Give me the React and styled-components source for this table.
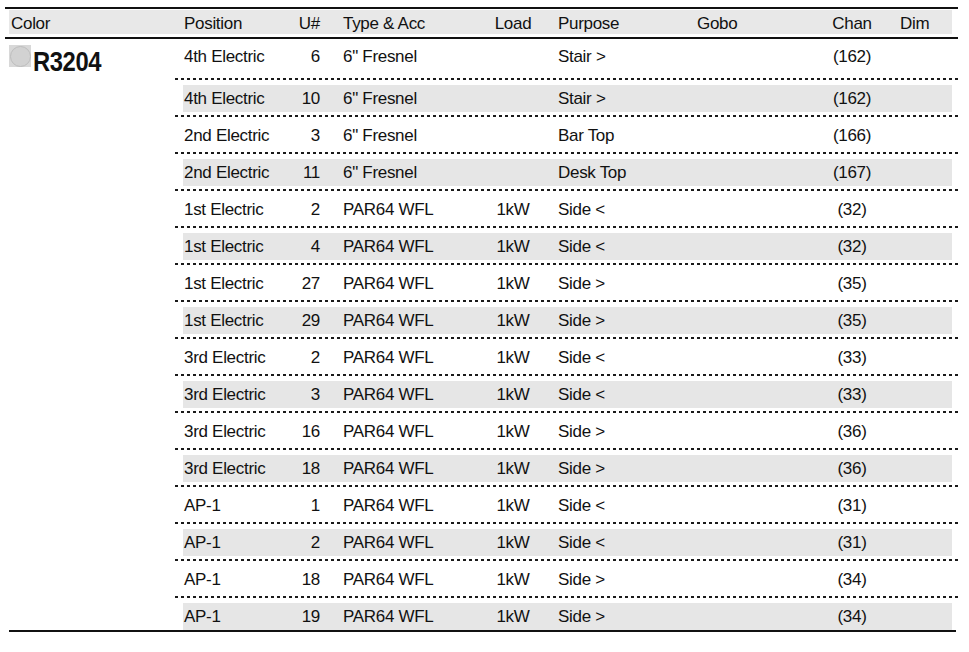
import React from 'react';
import styled, {createGlobalStyle} from 'styled-components';

const GlobalStyle = createGlobalStyle`
    html, body {
        margin: 0;
        padding: 0;
        background: #fff;
    }

    body {
        font-family: "Liberation Sans", Arial, sans-serif;
        color: #111;
    }
`;

// column grid shared by the header and every row (x measured from the band start at 183)
const columns = '107px 30px 153px 80px 137px 120px 84px 58px';

const Page = styled.div`
    width: 969px;
    padding-top: 7px;
`;

const Rule = styled.div`
    margin-left: ${({left}) => left}px;
    width: ${({width}) => width}px;
    height: 2px;
    background: #111;
    margin-top: ${({top}) => top || 0}px;
`;

const HeaderBar = styled.div`
    display: grid;
    grid-template-columns: 174px ${columns};
    margin: 1px 0 0 9px;
    width: 943px;
    height: 24px;
    background: #e8e8e8;
    box-sizing: border-box;
    padding-top: 4px;
    font-size: 17px;
    line-height: 20px;
    letter-spacing: -0.3px;
`;

const Cell = styled.div`
    white-space: nowrap;
    text-align: ${({align}) => align || 'left'};
    padding-left: ${({pl}) => pl || 0}px;
    padding-right: ${({pr}) => pr || 0}px;
`;

const Body = styled.div`
    display: flex;
    margin-left: 5px;
`;

const ColorCell = styled.div`
    width: 170px;
    display: flex;
    align-items: flex-start;
    padding: 6px 0 0 4px;
    box-sizing: border-box;
`;

const Swatch = styled.div`
    width: 22px;
    height: 22px;
    background: #d8d8d8;
    display: flex;
    align-items: center;
    justify-content: center;
    flex-shrink: 0;

    &::after {
        content: '';
        width: 19px;
        height: 19px;
        border-radius: 50%;
        border: 1px solid #bdbdbd;
        background: #d2d2d2;
    }
`;

const ColorName = styled.div`
    margin: 3px 0 0 2px;
    font-weight: bold;
    font-size: 28px;
    line-height: 28px;
    letter-spacing: -0.5px;
    transform: scaleX(0.85);
    transform-origin: left center;
`;

const Rows = styled.div`
    width: 783px;
`;

const Row = styled.div`
    padding: ${({first, last}) => (first ? '4px 0 8px' : last ? '7px 0 0' : '7px 0 3px')};
    background-image: ${({first}) =>
        first ? 'none' : 'repeating-linear-gradient(to right, #1a1a1a 0 3px, transparent 3px 6px)'};
    background-size: 100% 2px;
    background-repeat: no-repeat;
`;

const Band = styled.div`
    display: grid;
    grid-template-columns: ${columns};
    margin: 0 6px 0 8px;
    height: 27px;
    line-height: 27px;
    font-size: 17px;
    letter-spacing: -0.3px;
    background: ${({shaded}) => (shaded ? '#e6e6e6' : 'transparent')};
`;

const fixtures = [
    ['4th Electric', '6', '6" Fresnel', '', 'Stair >', '(162)'],
    ['4th Electric', '10', '6" Fresnel', '', 'Stair >', '(162)'],
    ['2nd Electric', '3', '6" Fresnel', '', 'Bar Top', '(166)'],
    ['2nd Electric', '11', '6" Fresnel', '', 'Desk Top', '(167)'],
    ['1st Electric', '2', 'PAR64 WFL', '1kW', 'Side <', '(32)'],
    ['1st Electric', '4', 'PAR64 WFL', '1kW', 'Side <', '(32)'],
    ['1st Electric', '27', 'PAR64 WFL', '1kW', 'Side >', '(35)'],
    ['1st Electric', '29', 'PAR64 WFL', '1kW', 'Side >', '(35)'],
    ['3rd Electric', '2', 'PAR64 WFL', '1kW', 'Side <', '(33)'],
    ['3rd Electric', '3', 'PAR64 WFL', '1kW', 'Side <', '(33)'],
    ['3rd Electric', '16', 'PAR64 WFL', '1kW', 'Side >', '(36)'],
    ['3rd Electric', '18', 'PAR64 WFL', '1kW', 'Side >', '(36)'],
    ['AP-1', '1', 'PAR64 WFL', '1kW', 'Side <', '(31)'],
    ['AP-1', '2', 'PAR64 WFL', '1kW', 'Side <', '(31)'],
    ['AP-1', '18', 'PAR64 WFL', '1kW', 'Side >', '(34)'],
    ['AP-1', '19', 'PAR64 WFL', '1kW', 'Side >', '(34)'],
];

const App = () => {
    return (
        <Page>
            <GlobalStyle />
            <Rule left={5} width={953} />
            <HeaderBar>
                <Cell pl={2}>Color</Cell>
                <Cell pl={1}>Position</Cell>
                <Cell align='right' pr={-2}>U#</Cell>
                <Cell pl={23}>Type &amp; Acc</Cell>
                <Cell align='center'>Load</Cell>
                <Cell pl={5}>Purpose</Cell>
                <Cell pl={7}>Gobo</Cell>
                <Cell align='center'>Chan</Cell>
                <Cell pl={6}>Dim</Cell>
            </HeaderBar>
            <Rule left={5} width={953} top={3} />
            <Body>
                <ColorCell>
                    <Swatch />
                    <ColorName>R3204</ColorName>
                </ColorCell>
                <Rows>
                    {fixtures.map(([position, unit, type, load, purpose, chan], i) => (
                        <Row key={i} first={i === 0} last={i === fixtures.length - 1}>
                            <Band shaded={i % 2 === 1}>
                                <Cell pl={1}>{position}</Cell>
                                <Cell align='right'>{unit}</Cell>
                                <Cell pl={23}>{type}</Cell>
                                <Cell align='center'>{load}</Cell>
                                <Cell pl={5}>{purpose}</Cell>
                                <Cell pl={7}></Cell>
                                <Cell align='center'>{chan}</Cell>
                                <Cell pl={6}></Cell>
                            </Band>
                        </Row>
                    ))}
                </Rows>
            </Body>
            <Rule left={9} width={947} />
        </Page>
    );
};

export default App;
